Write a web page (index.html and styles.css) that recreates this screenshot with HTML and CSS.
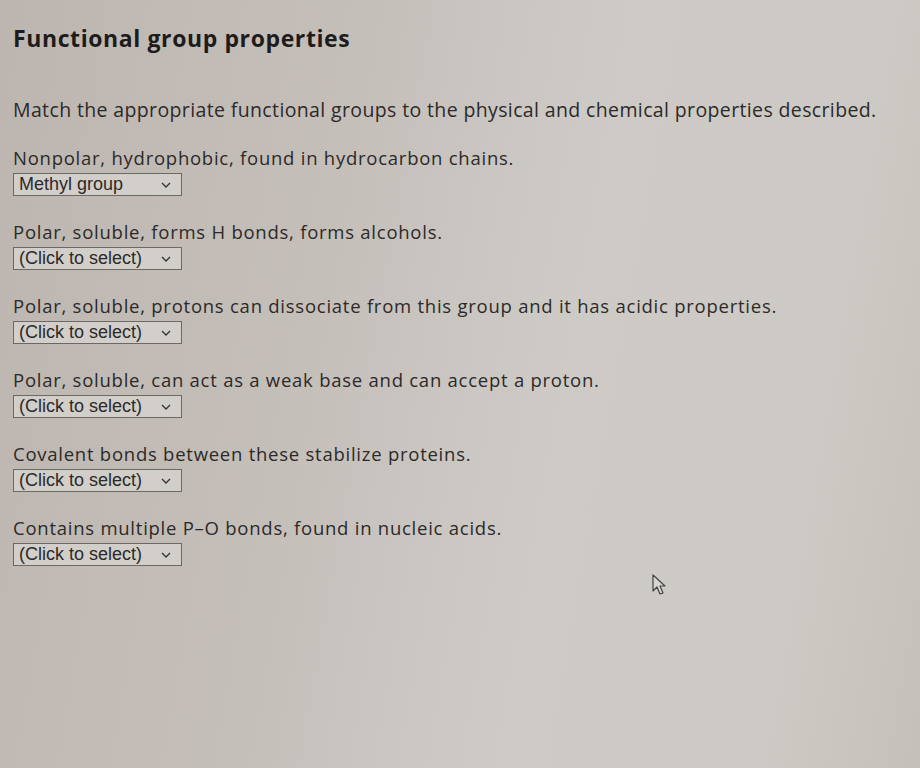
FILE: index.html
```html
<!DOCTYPE html>
<html>
<head>
<meta charset="utf-8">
<link rel="stylesheet" href="styles.css">
</head>
<body>
<div class="page">
  <h1 class="title">Functional group properties</h1>
  <p class="intro">Match the appropriate functional groups to the physical and chemical properties described.</p>
  <div class="questions">
    <div class="q">
      <div class="q-text">Nonpolar, hydrophobic, found in hydrocarbon chains.</div>
      <div class="sel"><span class="sel-val">Methyl group</span><svg class="chev" viewBox="0 0 10 6" width="10" height="6"><path d="M1 1 L5 5 L9 1" fill="none" stroke="#333" stroke-width="1.3"/></svg></div>
    </div>
    <div class="q">
      <div class="q-text">Polar, soluble, forms H bonds, forms alcohols.</div>
      <div class="sel"><span class="sel-val">(Click to select)</span><svg class="chev" viewBox="0 0 10 6" width="10" height="6"><path d="M1 1 L5 5 L9 1" fill="none" stroke="#333" stroke-width="1.3"/></svg></div>
    </div>
    <div class="q">
      <div class="q-text">Polar, soluble, protons can dissociate from this group and it has acidic properties.</div>
      <div class="sel"><span class="sel-val">(Click to select)</span><svg class="chev" viewBox="0 0 10 6" width="10" height="6"><path d="M1 1 L5 5 L9 1" fill="none" stroke="#333" stroke-width="1.3"/></svg></div>
    </div>
    <div class="q">
      <div class="q-text">Polar, soluble, can act as a weak base and can accept a proton.</div>
      <div class="sel"><span class="sel-val">(Click to select)</span><svg class="chev" viewBox="0 0 10 6" width="10" height="6"><path d="M1 1 L5 5 L9 1" fill="none" stroke="#333" stroke-width="1.3"/></svg></div>
    </div>
    <div class="q">
      <div class="q-text">Covalent bonds between these stabilize proteins.</div>
      <div class="sel"><span class="sel-val">(Click to select)</span><svg class="chev" viewBox="0 0 10 6" width="10" height="6"><path d="M1 1 L5 5 L9 1" fill="none" stroke="#333" stroke-width="1.3"/></svg></div>
    </div>
    <div class="q">
      <div class="q-text">Contains multiple P–O bonds, found in nucleic acids.</div>
      <div class="sel"><span class="sel-val">(Click to select)</span><svg class="chev" viewBox="0 0 10 6" width="10" height="6"><path d="M1 1 L5 5 L9 1" fill="none" stroke="#333" stroke-width="1.3"/></svg></div>
    </div>
  </div>
</div>
<svg class="cursor" viewBox="0 0 16 22" width="16" height="22"><path d="M1 1 L1 17 L5 13 L8 20 L11 19 L8 12 L13 12 Z" fill="#d8d6d2" stroke="#444" stroke-width="1.2" stroke-linejoin="round"/></svg>
</body>
</html>
```
FILE: styles.css
```css
html, body {
  margin: 0;
  padding: 0;
  height: 100%;
}
body {
  position: relative;
  background: linear-gradient(100deg, #bdb6b0 0%, #c5bfba 35%, #cecbc7 60%, #cdc9c4 85%, #c6c0ba 100%);
  color: #2c2a28;
  font-family: "Open Sans", "Liberation Sans", sans-serif;
  overflow: hidden;
}
.page {
  padding: 22px 0 0 13px;
}
.title {
  margin: 0;
  font-size: 23px;
  font-weight: 700;
  letter-spacing: 0.6px;
  line-height: 32px;
  color: #1e1c1b;
}
.intro {
  margin: 43px 0 0 0;
  font-size: 19.5px;
  letter-spacing: 0.37px;
  line-height: 26px;
}
.questions {
  margin-top: 23px;
  display: flex;
  flex-direction: column;
  gap: 24px;
}
.q {
  display: flex;
  flex-direction: column;
  gap: 3px;
}
.q-text {
  font-size: 18.5px;
  letter-spacing: 0.75px;
  line-height: 24px;
}
.sel {
  box-sizing: border-box;
  width: 169px;
  height: 23px;
  border: 1px solid #6b6865;
  background: #d2cfcb;
  display: flex;
  align-items: center;
  justify-content: space-between;
  padding: 0 10px 0 5px;
}
.sel-val {
  font-family: "Liberation Sans", Arial, sans-serif;
  font-size: 18px;
  color: #2c2a28;
}
.chev {
  display: block;
}
.cursor {
  position: absolute;
  left: 652px;
  top: 574px;
}
```
